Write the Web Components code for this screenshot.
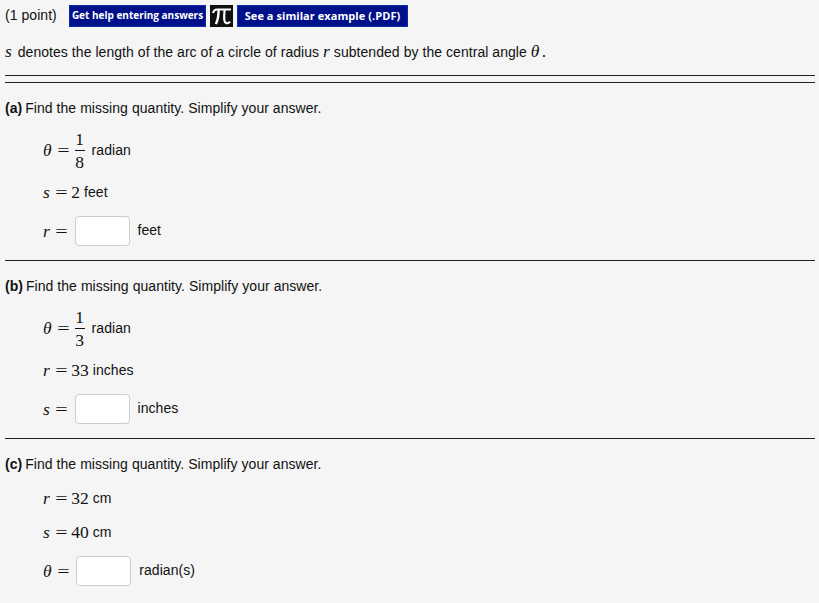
<!DOCTYPE html>
<html>
<head>
<meta charset="utf-8">
<style>
html, body { margin: 0; background: #f5f5f5; }
body { font: 14px/20px "Liberation Sans", Arial, sans-serif; letter-spacing: 0.05px; color: #111; }
</style>
</head>
<body>
<hw-problem></hw-problem>
<script>
const mathFont = '"Liberation Serif", "Times New Roman", serif';

class HwButton extends HTMLElement {
	constructor() {
		super();
		this.attachShadow({ mode: 'open' });
		this.shadowRoot.innerHTML = `
<style>
:host {
	display: flex;
	align-items: center;
	justify-content: center;
	height: 22px;
	box-sizing: border-box;
	padding-bottom: 2px;
	background: #00108a;
	border: 1px solid #0c2ca8;
	color: #fff;
	font: bold 11px "Open Sans", "Liberation Sans", sans-serif;
	letter-spacing: 0.06px;
	white-space: nowrap;
}
</style>
<slot></slot>`;
	}
}

// italic variable
class MathVar extends HTMLElement {
	constructor() {
		super();
		this.attachShadow({ mode: 'open' });
		this.shadowRoot.innerHTML = `
<style>
:host { display: inline; font: italic 17.5px ${mathFont}; letter-spacing: 0; }
</style>
<slot></slot>`;
	}
}

// upright number or sign
class MathNum extends HTMLElement {
	constructor() {
		super();
		this.attachShadow({ mode: 'open' });
		this.shadowRoot.innerHTML = `
<style>
:host { display: inline; margin: 0 -1px 0 -1.5px; font: 17.5px ${mathFont}; letter-spacing: 0; }
</style>
<slot></slot>`;
	}
}

// the reference's equals sign is wider than the font's one
class MathEq extends HTMLElement {
	constructor() {
		super();
		this.attachShadow({ mode: 'open' });
		this.shadowRoot.innerHTML = `
<style>
:host {
	display: inline-block;
	width: 13px;
	text-align: center;
	font: 17.5px ${mathFont};
	transform: scaleX(1.25);
}
</style>
=`;
	}
}

class MathFrac extends HTMLElement {
	constructor() {
		super();
		this.attachShadow({ mode: 'open' });
		this.shadowRoot.innerHTML = `
<style>
:host {
	display: inline-flex;
	flex-direction: column;
	align-items: center;
	width: 10px;
	margin-right: 2px;
	font: 17.5px/18px ${mathFont};
	letter-spacing: 0;
}
.bar { align-self: stretch; height: 1px; background: #111; margin: 2px 0; }
</style>
<div>${this.getAttribute('n')}</div>
<div class="bar"></div>
<div>${this.getAttribute('d')}</div>`;
	}
}

class AnswerBox extends HTMLElement {
	constructor() {
		super();
		this.attachShadow({ mode: 'open' });
		this.shadowRoot.innerHTML = `
<style>
:host {
	display: block;
	width: 55px;
	height: 30px;
	margin: 0 3px 0 1.7px;
	box-sizing: border-box;
	background: #fff;
	border: 1px solid #ccc;
	border-radius: 4px;
}
</style>`;
	}
}

class MathRow extends HTMLElement {
	constructor() {
		super();
		this.attachShadow({ mode: 'open' });
		this.shadowRoot.innerHTML = `
<style>
:host {
	display: flex;
	align-items: center;
	gap: 5px;
	height: 30px;
	margin-left: 38px;
}
:host([frac]) { height: 42px; }
</style>
<slot></slot>`;
	}
}

class HwPart extends HTMLElement {
	constructor() {
		super();
		this.attachShadow({ mode: 'open' });
		this.shadowRoot.innerHTML = `
<style>
:host { display: block; }
.title { height: 20px; margin-bottom: 9px; }
.title b { margin-right: -1px; }
::slotted(math-row) { margin-bottom: 4px; }
::slotted(math-row[frac]) { margin-top: 11px; margin-bottom: 6px; }
::slotted(math-row:last-child) { margin-top: 9px; margin-bottom: 0; }
</style>
<div class="title"><b>${this.getAttribute('label')}</b> Find the missing quantity. Simplify your answer.</div>
<slot></slot>`;
	}
}

class HwRule extends HTMLElement {
	constructor() {
		super();
		this.attachShadow({ mode: 'open' });
		this.shadowRoot.innerHTML = `
<style>
:host { display: block; height: 1px; background: #222; }
</style>`;
	}
}

class HwProblem extends HTMLElement {
	constructor() {
		super();
		this.attachShadow({ mode: 'open' });
		this.shadowRoot.innerHTML = `
<style>
:host { display: block; padding: 5px 4px 0 5px; }
.top { display: flex; align-items: center; height: 22px; }
.pts { width: 64px; padding-bottom: 2px; }
.pi { display: block; width: 23px; height: 22px; margin: 0 4px; background: #111; }
.intro { margin-top: 14px; height: 20px; }
.double { margin-top: 14px; display: flex; flex-direction: column; gap: 6px; }
hw-part.first { margin-top: 15px; }
.sep { margin: 14px 0 15px; }
math-row:last-child span { padding-bottom: 2px; }
</style>
<div class="top">
	<div class="pts">(1 point)</div>
	<hw-button style="width:137px;font-size:10px;letter-spacing:0">Get help entering answers</hw-button>
	<svg class="pi" viewBox="0 0 23 22" fill="none" stroke="#fff">
		<path d="M3 8C3.6 5.6 5 4.4 7 4.4H21" stroke-width="2"/>
		<path d="M8.6 5C8.6 10 8 15 5.8 19" stroke-width="2.4"/>
		<path d="M14.6 5C14.2 9 14 12 14.3 15C14.6 18.4 17.8 19.4 20 16.6" stroke-width="2.2"/>
	</svg>
	<hw-button style="width:171px">See a similar example (.PDF)</hw-button>
</div>
<div class="intro"><math-var style="margin-right:2px">s</math-var> denotes the length of the arc of a circle of radius <math-var>r</math-var> subtended by the central angle <math-var>θ</math-var><math-num style="margin:0 0 0 -2px">.</math-num></div>
<div class="double"><hw-rule></hw-rule><hw-rule></hw-rule></div>

<hw-part class="first" label="(a)">
	<math-row frac><math-var>θ</math-var><math-eq></math-eq><math-frac n="1" d="8"></math-frac><span>radian</span></math-row>
	<math-row><math-var>s</math-var><math-eq></math-eq><math-num>2</math-num><span>feet</span></math-row>
	<math-row><math-var>r</math-var><math-eq></math-eq><answer-box></answer-box><span>feet</span></math-row>
</hw-part>
<hw-rule class="sep"></hw-rule>

<hw-part label="(b)">
	<math-row frac><math-var>θ</math-var><math-eq></math-eq><math-frac n="1" d="3"></math-frac><span>radian</span></math-row>
	<math-row><math-var>r</math-var><math-eq></math-eq><math-num>33</math-num><span>inches</span></math-row>
	<math-row><math-var>s</math-var><math-eq></math-eq><answer-box></answer-box><span>inches</span></math-row>
</hw-part>
<hw-rule class="sep"></hw-rule>

<hw-part label="(c)">
	<math-row><math-var>r</math-var><math-eq></math-eq><math-num>32</math-num><span>cm</span></math-row>
	<math-row><math-var>s</math-var><math-eq></math-eq><math-num>40</math-num><span>cm</span></math-row>
	<math-row><math-var>θ</math-var><math-eq></math-eq><answer-box></answer-box><span>radian(s)</span></math-row>
</hw-part>`;
	}
}

customElements.define('hw-button', HwButton);
customElements.define('math-var', MathVar);
customElements.define('math-num', MathNum);
customElements.define('math-eq', MathEq);
customElements.define('math-frac', MathFrac);
customElements.define('answer-box', AnswerBox);
customElements.define('math-row', MathRow);
customElements.define('hw-part', HwPart);
customElements.define('hw-rule', HwRule);
customElements.define('hw-problem', HwProblem);
</script>
</body>
</html>
